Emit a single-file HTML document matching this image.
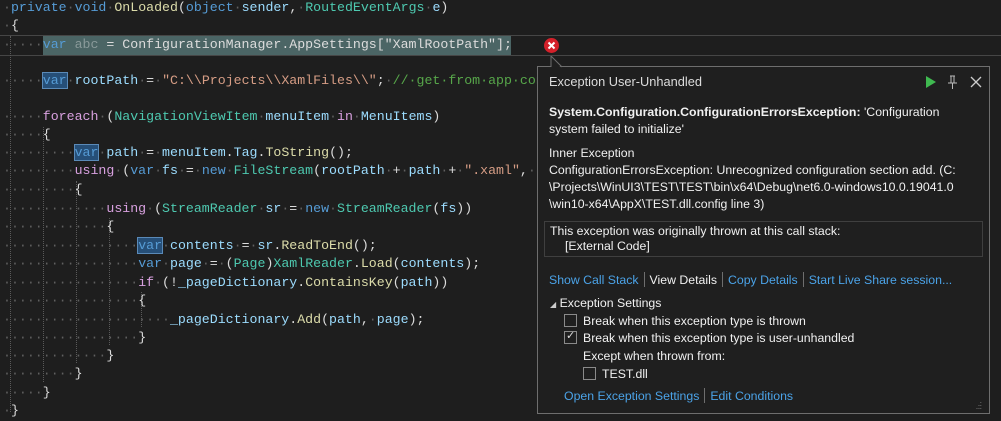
<!DOCTYPE html>
<html><head><meta charset="utf-8"><style>
body{margin:0;width:1001px;height:421px;background:#1e1e1e;overflow:hidden;position:relative;font-family:"Liberation Mono",monospace}
.l{position:absolute;left:3px;height:18px;line-height:18px;font-size:13.25px;white-space:pre;color:#dcdcdc}
.w{color:#606060}.k{color:#569cd6}.c{color:#d8a0df}.t{color:#4ec9b0}.m{color:#dcdcaa}.v{color:#9cdcfe}.s{color:#d69d85}.g{color:#57a64a}
.hb{background:#264f78;outline:1px solid #5a8ab8}
.guide{position:absolute;width:0;border-left:1px dotted #5a5a5a}
.pop{position:absolute;left:537px;top:66px;width:451px;height:346px;background:#1f1f1f;border:1px solid #6e6e6e;font-family:"Liberation Sans",sans-serif;font-size:12.3px;color:#f1f1f1}
.pop div{position:absolute;white-space:nowrap}
.a{color:#4ba3e8}
.cb{display:inline-block;width:11px;height:11px;border:1px solid #8a8a8a;vertical-align:-2px;margin-right:6px;position:relative}
.sep{display:inline-block;width:1px;height:15px;background:#6e6e6e;vertical-align:-3px;margin:0 5px}
</style></head><body>
<div style="position:absolute;left:0;top:35px;width:1001px;height:19px;border-top:1px solid #464646;border-bottom:1px solid #464646"></div>
<div style="position:absolute;left:43px;top:36px;width:468px;height:19px;background:#4b6565"></div>
<div class="guide" style="left:10px;top:36px;height:376px"></div>
<div class="guide" style="left:43px;top:127px;height:255px"></div>
<div class="guide" style="left:76px;top:181px;height:182px"></div>
<div class="guide" style="left:109px;top:218px;height:127px"></div>
<div class="guide" style="left:141px;top:292px;height:35px"></div>

<div class="l" style="top:-1px"><span class="w">·</span><span class="k">private</span><span class="w">·</span><span class="k">void</span><span class="w">·</span><span class="m">OnLoaded</span>(<span class="k">object</span><span class="w">·</span><span class="v">sender</span>,<span class="w">·</span><span class="t">RoutedEventArgs</span><span class="w">·</span><span class="v">e</span>)</div>
<div class="l" style="top:17px"><span class="w">·</span>{</div>
<div class="l" style="top:36px"><span class="w">·····</span><span class="k">var</span> <span style="color:#8a9a9a">abc</span> = ConfigurationManager.AppSettings["XamlRootPath"];</div>
<div class="l" style="top:72px"><span class="w">·····</span><span class="k hb">var</span><span class="w">·</span><span class="v">rootPath</span><span class="w">·</span>=<span class="w">·</span><span class="s">"C:\\Projects\\XamlFiles\\"</span>;<span class="w">·</span><span class="g">//·get·from·app·config</span></div>
<div class="l" style="top:108px"><span class="w">·····</span><span class="c">foreach</span><span class="w">·</span>(<span class="t">NavigationViewItem</span><span class="w">·</span><span class="v">menuItem</span><span class="w">·</span><span class="c">in</span><span class="w">·</span><span class="v">MenuItems</span>)</div>
<div class="l" style="top:126px"><span class="w">·····</span>{</div>
<div class="l" style="top:144px"><span class="w">·········</span><span class="k hb">var</span><span class="w">·</span><span class="v">path</span><span class="w">·</span>=<span class="w">·</span><span class="v">menuItem</span>.<span class="v">Tag</span>.<span class="m">ToString</span>();</div>
<div class="l" style="top:162px"><span class="w">·········</span><span class="c">using</span><span class="w">·</span>(<span class="k">var</span><span class="w">·</span><span class="v">fs</span><span class="w">·</span>=<span class="w">·</span><span class="k">new</span><span class="w">·</span><span class="t">FileStream</span>(<span class="v">rootPath</span><span class="w">·</span>+<span class="w">·</span><span class="v">path</span><span class="w">·</span>+<span class="w">·</span><span class="s">".xaml"</span>,<span class="w">·</span>FileMode.Open))</div>
<div class="l" style="top:181px"><span class="w">·········</span>{</div>
<div class="l" style="top:200px"><span class="w">·············</span><span class="c">using</span><span class="w">·</span>(<span class="t">StreamReader</span><span class="w">·</span><span class="v">sr</span><span class="w">·</span>=<span class="w">·</span><span class="k">new</span><span class="w">·</span><span class="t">StreamReader</span>(<span class="v">fs</span>))</div>
<div class="l" style="top:218px"><span class="w">·············</span>{</div>
<div class="l" style="top:237px"><span class="w">·················</span><span class="k hb">var</span><span class="w">·</span><span class="v">contents</span><span class="w">·</span>=<span class="w">·</span><span class="v">sr</span>.<span class="m">ReadToEnd</span>();</div>
<div class="l" style="top:255px"><span class="w">·················</span><span class="k">var</span><span class="w">·</span><span class="v">page</span><span class="w">·</span>=<span class="w">·</span>(<span class="t">Page</span>)<span class="t">XamlReader</span>.<span class="m">Load</span>(<span class="v">contents</span>);</div>
<div class="l" style="top:274px"><span class="w">·················</span><span class="c">if</span><span class="w">·</span>(!<span class="v">_pageDictionary</span>.<span class="m">ContainsKey</span>(<span class="v">path</span>))</div>
<div class="l" style="top:292px"><span class="w">·················</span>{</div>
<div class="l" style="top:311px"><span class="w">·····················</span><span class="v">_pageDictionary</span>.<span class="m">Add</span>(<span class="v">path</span>,<span class="w">·</span><span class="v">page</span>);</div>
<div class="l" style="top:329px"><span class="w">·················</span>}</div>
<div class="l" style="top:347px"><span class="w">·············</span>}</div>
<div class="l" style="top:365px"><span class="w">·········</span>}</div>
<div class="l" style="top:384px"><span class="w">·····</span>}</div>
<div class="l" style="top:402px"><span class="w">·</span>}</div>

<svg style="position:absolute;left:543px;top:37px" width="17" height="17"><circle cx="8.5" cy="8.5" r="7.5" fill="#d4202a"/><path d="M5.5 5.5L11.5 11.5M11.5 5.5L5.5 11.5" stroke="#fff" stroke-width="2"/></svg>
<svg style="position:absolute;left:550px;top:56px;z-index:3" width="14" height="12"><path d="M1 0L1 11M1 0L12 11" stroke="#6e6e6e" fill="none"/><path d="M1.5 2L1.5 11L10.5 11Z" fill="#1f1f1f"/></svg>

<div class="pop">
<div style="left:11px;top:7px;font-size:12.8px;color:#dcdcdc">Exception User-Unhandled</div>
<svg style="position:absolute;left:386px;top:7px" width="66" height="16"><path d="M2 2L12 8L2 14Z" fill="#3fb950"/><path d="M26 2h5M27 2v7h3v-7M24 9h9M28.5 9v6" stroke="#bbb" fill="none"/><path d="M47 3L57 13M57 3L47 13" stroke="#ccc" stroke-width="1.3"/></svg>
<div style="left:11px;top:38px"><b>System.Configuration.ConfigurationErrorsException:</b> 'Configuration</div>
<div style="left:11px;top:55px">system failed to initialize'</div>
<div style="left:11px;top:79px">Inner Exception</div>
<div style="left:11px;top:96px">ConfigurationErrorsException: Unrecognized configuration section add. (C:</div>
<div style="left:11px;top:113px">\Projects\WinUI3\TEST\TEST\bin\x64\Debug\net6.0-windows10.0.19041.0</div>
<div style="left:11px;top:130px">\win10-x64\AppX\TEST.dll.config line 3)</div>
<div style="left:6px;top:154px;width:437px;height:34px;border:1px solid #3f3f3f"></div>
<div style="left:12px;top:157px">This exception was originally thrown at this call stack:</div>
<div style="left:27px;top:172px">[External Code]</div>
<div style="left:11px;top:205px"><span class="a">Show Call Stack</span><span class="sep"></span>View Details<span class="sep"></span><span class="a">Copy Details</span><span class="sep"></span><span class="a">Start Live Share session...</span></div>
<div style="left:12px;top:229px"><span style="font-size:8px;color:#ccc">◢</span> Exception Settings</div>
<div style="left:26px;top:247px"><span class="cb"></span>Break when this exception type is thrown</div>
<div style="left:26px;top:264px"><span class="cb"><span style="position:absolute;left:1px;top:-3px;font-size:11px;color:#ddd">✓</span></span>Break when this exception type is user-unhandled</div>
<div style="left:45px;top:282px">Except when thrown from:</div>
<div style="left:45px;top:300px"><span class="cb"></span>TEST.dll</div>
<div style="left:26px;top:321px"><span class="a">Open Exception Settings</span><span class="sep"></span><span class="a">Edit Conditions</span></div>
<div style="left:438px;top:333px;font-size:7px;color:#aaa;line-height:3px">&nbsp;&nbsp;.<br>&nbsp;..<br>...</div>
</div>
</body></html>
